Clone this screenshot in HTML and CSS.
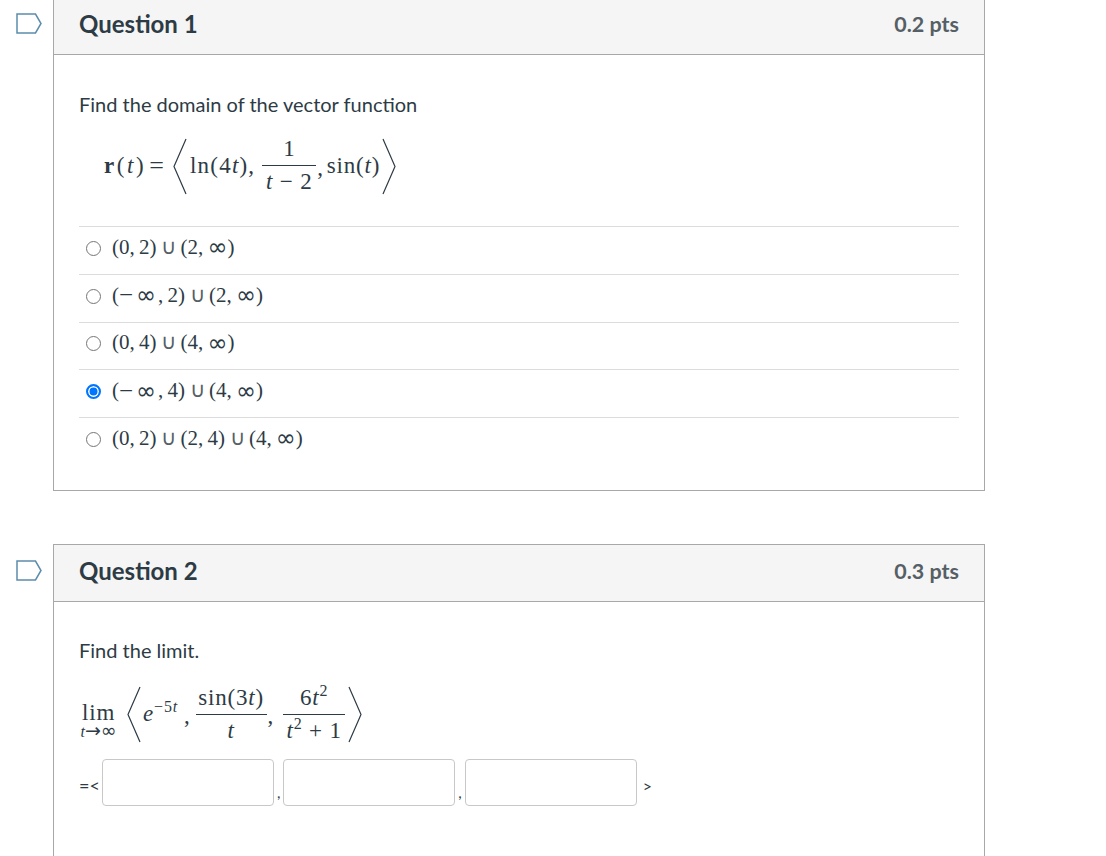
FILE: index.html
```html
<!DOCTYPE html>
<html lang="en">
<head>
    <meta charset="UTF-8">
    <title>Quiz</title>
    <link rel="stylesheet" href="styles.css">
</head>
<body>
    <div class="page">
        <div class="question-row">
            <svg class="flag" width="26" height="21" viewBox="0 0 26 21"><path d="M1 1H19.5L25 10.5L19.5 20H1Z" fill="#fff" stroke="#5b8cab" stroke-width="1.5"/></svg>
            <div class="question">
                <div class="question-header">
                    <span class="question-title">Question 1</span>
                    <span class="question-pts">0.2 pts</span>
                </div>
                <div class="question-body q1-body">
                    <p class="prompt">Find the domain of the vector function</p>
                    <div class="math-block q1-math math">
                        <span class="func"><b>r</b>(<i>t</i>)</span><span class="eq">=</span>
                        <svg class="angle" width="16" height="57" viewBox="0 0 16 57"><path d="M15 1L3 28.5L15 56" fill="none" stroke="#2d3b45" stroke-width="1.2"/></svg>
                        <span class="log">ln(4<i>t</i>),</span>
                        <span class="frac q1-frac"><span class="num">1</span><span class="den"><i>t</i> − 2</span></span>
                        <span class="comma">,</span>
                        <span>sin(<i>t</i>)</span>
                        <svg class="angle close-angle" width="16" height="57" viewBox="0 0 16 57"><path d="M1 1L13 28.5L1 56" fill="none" stroke="#2d3b45" stroke-width="1.2"/></svg>
                    </div>
                    <div class="answers">
                        <div class="answer"><span class="radio"></span><span class="math inline">(0,&thinsp;2)<span class="cup">∪</span>(2,&thinsp;<span class="inf">∞</span>)</span></div>
                        <div class="answer"><span class="radio"></span><span class="math inline">(<span class="neg">−</span><span class="inf">∞</span>,&thinsp;2)<span class="cup">∪</span>(2,&thinsp;<span class="inf">∞</span>)</span></div>
                        <div class="answer"><span class="radio"></span><span class="math inline">(0,&thinsp;4)<span class="cup">∪</span>(4,&thinsp;<span class="inf">∞</span>)</span></div>
                        <div class="answer"><span class="radio checked"></span><span class="math inline">(<span class="neg">−</span><span class="inf">∞</span>,&thinsp;4)<span class="cup">∪</span>(4,&thinsp;<span class="inf">∞</span>)</span></div>
                        <div class="answer"><span class="radio"></span><span class="math inline">(0,&thinsp;2)<span class="cup">∪</span>(2,&thinsp;4)<span class="cup">∪</span>(4,&thinsp;<span class="inf">∞</span>)</span></div>
                    </div>
                </div>
            </div>
        </div>

        <div class="question-row">
            <svg class="flag" width="26" height="21" viewBox="0 0 26 21"><path d="M1 1H19.5L25 10.5L19.5 20H1Z" fill="#fff" stroke="#5b8cab" stroke-width="1.5"/></svg>
            <div class="question">
                <div class="question-header">
                    <span class="question-title">Question 2</span>
                    <span class="question-pts">0.3 pts</span>
                </div>
                <div class="question-body q2-body">
                    <p class="prompt">Find the limit.</p>
                    <div class="math-block q2-math math">
                        <span class="lim"><span>lim</span><small>t<span class="inf">→∞</span></small></span>
                        <svg class="angle" width="16" height="57" viewBox="0 0 16 57"><path d="M15 1L3 28.5L15 56" fill="none" stroke="#2d3b45" stroke-width="1.2"/></svg>
                        <span class="exp"><i>e</i><sup>−5<i>t</i></sup></span>
                        <span class="comma">,</span>
                        <span class="frac sin-frac"><span class="num">sin(3<i>t</i>)</span><span class="den"><i>t</i></span></span>
                        <span class="comma">,</span>
                        <span class="frac poly-frac"><span class="num">6<i>t</i><sup>2</sup></span><span class="den"><i>t</i><sup>2</sup> + 1</span></span>
                        <svg class="angle" width="16" height="57" viewBox="0 0 16 57"><path d="M1 1L13 28.5L1 56" fill="none" stroke="#2d3b45" stroke-width="1.2"/></svg>
                    </div>
                    <div class="fill-row">
                        <span class="lead">=&lt;</span>
                        <input class="blank" type="text">
                        <span class="sep">,</span>
                        <input class="blank" type="text">
                        <span class="sep">,</span>
                        <input class="blank" type="text">
                        <span class="close">&gt;</span>
                    </div>
                </div>
            </div>
        </div>
    </div>
</body>
</html>
```

FILE: styles.css
```css
html, body {
    margin: 0;
    height: 856px;
    overflow: hidden;
    background: #fff;
}

body {
    font-family: Lato, "Liberation Sans", sans-serif;
    color: #2d3b45;
}

.page {
    height: 859px;
    overflow: hidden;
    margin-top: -3px;
    padding-left: 16px;
    display: flex;
    flex-direction: column;
    gap: 53px;
}

.question-row {
    display: flex;
    align-items: flex-start;
}

.flag {
    flex: none;
    margin-top: 16px;
    margin-right: 11px;
}

.question {
    width: 932px;
    box-sizing: border-box;
    border: 1px solid #a8a8a8;
}

.question-header {
    height: 57px;
    box-sizing: border-box;
    padding: 0 25px 5px;
    display: flex;
    align-items: center;
    justify-content: space-between;
    background: #f5f5f5;
    border-bottom: 1px solid #a8a8a8;
}

.question-title {
    font-size: 24px;
    font-weight: 700;
}

.question-pts {
    font-size: 21.5px;
    font-weight: 700;
    color: #565f66;
}

.question-body {
    padding: 0 25px;
}

.q1-body {
    height: 435px;
}

.q2-body {
    height: 400px;
}

.prompt {
    margin: 0;
    padding-top: 37px;
    font-size: 20px;
    line-height: 24px;
}

.q2-body .prompt {
    padding-top: 36px;
}

.math {
    font-family: "Liberation Serif", serif;
    font-size: 23px;
    letter-spacing: 0.8px;
    color: #2d3b45;
}

.math.inline {
    display: flex;
    align-items: center;
    padding-bottom: 2px;
    font-size: 21px;
    letter-spacing: 0;
}

.math-block {
    display: flex;
    align-items: center;
    white-space: pre;
}

.q1-math {
    margin-top: 20px;
    padding-left: 25px;
    height: 60px;
}

.q2-math {
    margin-top: 22px;
    padding-left: 3px;
    height: 60px;
}

.func {
    letter-spacing: 2.6px;
}

.eq {
    margin: 0 7px 0 3px;
    font-size: 26px;
    letter-spacing: 0;
}

.log {
    margin-left: 3px;
    letter-spacing: 1.2px;
}

.angle {
    flex: none;
}

.close-angle {
    margin-left: 2px;
}

.comma {
    margin: 3px 3px 0 1px;
}

.frac {
    display: inline-flex;
    flex-direction: column;
    align-items: center;
    padding-bottom: 2px;
}

.frac .num {
    line-height: 32px;
}

.frac .den {
    align-self: stretch;
    text-align: center;
    border-top: 1px solid #2d3b45;
    line-height: 32px;
}

.q1-frac {
    width: 54px;
    margin-left: 7px;
}

.sin-frac {
    width: 71px;
    margin-left: 2px;
    padding-bottom: 0;
}

.poly-frac {
    width: 62px;
    margin-left: 6px;
    margin-right: 3px;
    padding-bottom: 0;
}

sup {
    font-size: 16px;
    line-height: 0;
}

.exp {
    margin-left: 2px;
    margin-right: 5px;
}

.lim {
    display: inline-flex;
    flex-direction: column;
    align-items: center;
    padding-top: 12px;
    margin-right: 10px;
    line-height: 24px;
}

.lim small {
    font-size: 16px;
    line-height: 14px;
    font-style: italic;
    letter-spacing: 0;
    margin-left: -3px;
    margin-right: -3px;
}

.inf {
    font-family: "DejaVu Sans", sans-serif;
    font-style: normal;
    font-size: 24px;
    line-height: 0;
    letter-spacing: 0;
}

.lim .inf {
    font-size: 19px;
}

.neg {
    margin-right: 3px;
    font-size: 25px;
    line-height: 0;
}

.neg + .inf {
    margin-right: 2px;
}

.answers {
    margin-top: 30px;
}

.answer {
    height: 47.75px;
    box-sizing: border-box;
    border-top: 1px solid #dcdcdc;
    padding: 0 0 4px 7px;
    display: flex;
    align-items: center;
    gap: 11px;
}

.radio {
    flex: none;
    width: 15px;
    height: 15px;
    box-sizing: border-box;
    border: 1.5px solid #767676;
    border-radius: 50%;
    background: #fff;
}

.radio.checked {
    border: 2px solid #0075ff;
    background: #0075ff;
    box-shadow: inset 0 0 0 1.5px #fff;
}

.cup {
    margin: 0 4px 0 5px;
    color: #565f66;
}

.fill-row {
    margin-top: 15px;
    display: flex;
    align-items: center;
    font-size: 18px;
}

.lead {
    margin: 5px 0 0 0;
}

.blank {
    width: 172px;
    height: 47px;
    box-sizing: border-box;
    padding: 0;
    border: 1px solid #c8c8c8;
    border-radius: 4px;
    background: #fff;
    margin-left: 2px;
}

.sep {
    margin: 18px 1px 0 3px;
    font-size: 15px;
}

.close {
    margin: 5px 0 0 6px;
    font-size: 16px;
}
```
